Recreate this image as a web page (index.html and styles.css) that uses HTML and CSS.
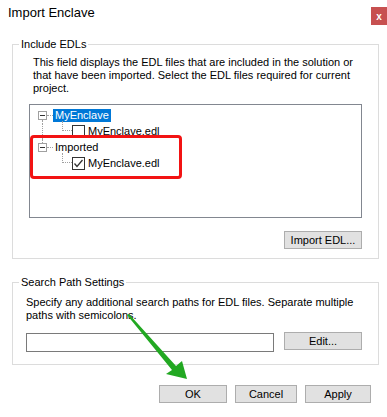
FILE: index.html
```html
<!DOCTYPE html>
<html lang="en">
<head>
    <meta charset="UTF-8">
    <title>Import Enclave</title>
    <link rel="stylesheet" href="styles.css">
</head>
<body>
    <div class="dialog">
        <div class="titlebar">
            <span class="title">Import Enclave</span>
            <button class="close">x</button>
        </div>

        <fieldset class="group group-edl">
            <legend>Include EDLs</legend>
            <p class="desc">This field displays the EDL files that are included in the solution or<br>that have been imported. Select the EDL files required for current<br>project.</p>

            <div class="tree">
                <div class="node">
                    <span class="expander top-open"></span>
                    <span class="stub"></span>
                    <span class="label selected">MyEnclave</span>
                </div>
                <div class="leaf">
                    <span class="trunk"></span>
                    <span class="elbow"></span>
                    <span class="check"></span>
                    <span class="label">MyEnclave.edl</span>
                </div>
                <div class="node">
                    <span class="expander from-above"></span>
                    <span class="stub"></span>
                    <span class="label">Imported</span>
                </div>
                <div class="leaf">
                    <span class="trunk none"></span>
                    <span class="elbow"></span>
                    <span class="check checked">
                        <svg width="11" height="11" viewBox="0 0 11 11"><polyline points="1.5,5.5 4,8.5 9.5,2" fill="none" stroke="#333" stroke-width="1.3"/></svg>
                    </span>
                    <span class="label">MyEnclave.edl</span>
                </div>
                <div class="callout"></div>
            </div>

            <div class="btn-row">
                <button class="btn btn-import">Import EDL...</button>
            </div>
        </fieldset>

        <fieldset class="group group-search">
            <legend>Search Path Settings</legend>
            <p class="desc">Specify any additional search paths for EDL files. Separate multiple<br>paths with semicolons.</p>
            <div class="path-row">
                <input class="path-input" type="text">
                <button class="btn btn-edit">Edit...</button>
            </div>
        </fieldset>

        <div class="actions">
            <button class="btn btn-ok">OK</button>
            <button class="btn btn-cancel">Cancel</button>
            <button class="btn btn-apply">Apply</button>
        </div>

        <!-- annotation arrow pointing at OK -->
        <svg class="arrow" width="387" height="417" viewBox="0 0 387 417">
            <polygon points="127,315 129,314 176,366 182,361 187,379 166,374 172,370" fill="#22a822"/>
        </svg>
    </div>
</body>
</html>
```

FILE: styles.css
```css
* {
    margin: 0;
    padding: 0;
    box-sizing: border-box;
}

body {
    font-family: 'Liberation Sans', Arial, sans-serif;
    font-size: 11px;
    color: #000;
    background: #fff;
    width: 387px;
    height: 417px;
    overflow: hidden;
}

.dialog {
    position: relative;
    height: 417px;
}

.titlebar {
    display: flex;
    justify-content: space-between;
    align-items: flex-start;
    height: 37px;
    padding-left: 8px;
}

.title {
    font-size: 13px;
    line-height: 16px;
    margin-top: 5px;
}

.close {
    width: 16px;
    height: 18px;
    margin-top: 7px;
    background: #c75050;
    color: #fff;
    border: none;
    font: bold 10px 'Liberation Sans', Arial, sans-serif;
}

.group {
    border: 1px solid #dcdcdc;
    margin: 0 8px 0 12px;
    padding: 0 16px 9px;
}

.group legend {
    font-size: 11px;
    line-height: 14px;
    padding: 0 2px;
    margin-left: -10px;
}

.desc {
    line-height: 13px;
}

.group-edl .desc {
    margin-top: 5px;
    padding-left: 4px;
}

/* tree view */
.tree {
    position: relative;
    margin-top: 9px;
    height: 114px;
    border: 1px solid #828790;
    padding-top: 2px;
}

.node, .leaf {
    display: flex;
    align-items: center;
    height: 16px;
}

.node {
    padding-left: 8px;
}

.leaf {
    padding-left: 12px;
}

.expander {
    position: relative;
    width: 9px;
    height: 9px;
    border: 1px solid #a0a0a0;
    background: #fff;
}

.expander::before {
    content: '';
    position: absolute;
    left: 1px;
    top: 3px;
    width: 5px;
    height: 1px;
    background: #333;
}

.expander.top-open::after {
    content: '';
    position: absolute;
    left: 3px;
    top: 8px;
    height: 4px;
    border-left: 1px dotted #a0a0a0;
}

.expander.from-above::after {
    content: '';
    position: absolute;
    left: 3px;
    top: -5px;
    height: 4px;
    border-left: 1px dotted #a0a0a0;
}

.stub {
    width: 6px;
    border-top: 1px dotted #a0a0a0;
}

.label {
    padding: 0 2px;
    line-height: 13px;
    white-space: nowrap;
}

.label.selected {
    background: #0078d7;
    color: #fff;
}

.trunk {
    width: 20px;
    align-self: stretch;
    border-left: 1px dotted #a0a0a0;
}

.trunk.none {
    border-left: none;
}

.elbow {
    width: 10px;
    height: 10px;
    margin-top: -2px;
    margin-bottom: 8px;
    border-left: 1px dotted #a0a0a0;
    border-bottom: 1px dotted #a0a0a0;
}

.check {
    display: flex;
    align-items: center;
    justify-content: center;
    width: 13px;
    height: 13px;
    border: 1px solid #333;
    background: #fff;
}

.check + .label {
    margin-left: 1px;
}

.callout {
    position: absolute;
    left: 0;
    top: 30px;
    width: 152px;
    height: 44px;
    border: 3px solid #f21313;
    border-radius: 4px;
}

/* buttons */
.btn {
    height: 18px;
    background: #e1e1e1;
    border: 1px solid #adadad;
    font: 11px 'Liberation Sans', Arial, sans-serif;
    color: #000;
}

.btn-row {
    display: flex;
    justify-content: flex-end;
    margin-top: 13px;
}

.btn-import, .btn-edit {
    width: 78px;
}

.group-search {
    margin-top: 16px;
    padding: 0 16px 12px 13px;
}

.group-search legend {
    margin-left: -7px;
}

.group-search .desc {
    margin-top: 7px;
}

.path-row {
    display: flex;
    align-items: flex-start;
    margin-top: 10px;
}

.path-input {
    width: 248px;
    height: 19px;
    margin-top: 1px;
    border: 1px solid #7a7a7a;
    outline: none;
}

.btn-edit {
    margin-left: 10px;
}

.actions {
    display: flex;
    justify-content: flex-end;
    gap: 8px;
    margin-top: 20px;
    padding-right: 16px;
}

.btn-ok {
    width: 68px;
}

.btn-cancel {
    width: 62px;
}

.btn-apply {
    width: 66px;
}

.arrow {
    position: absolute;
    left: 0;
    top: 0;
    pointer-events: none;
}
```
